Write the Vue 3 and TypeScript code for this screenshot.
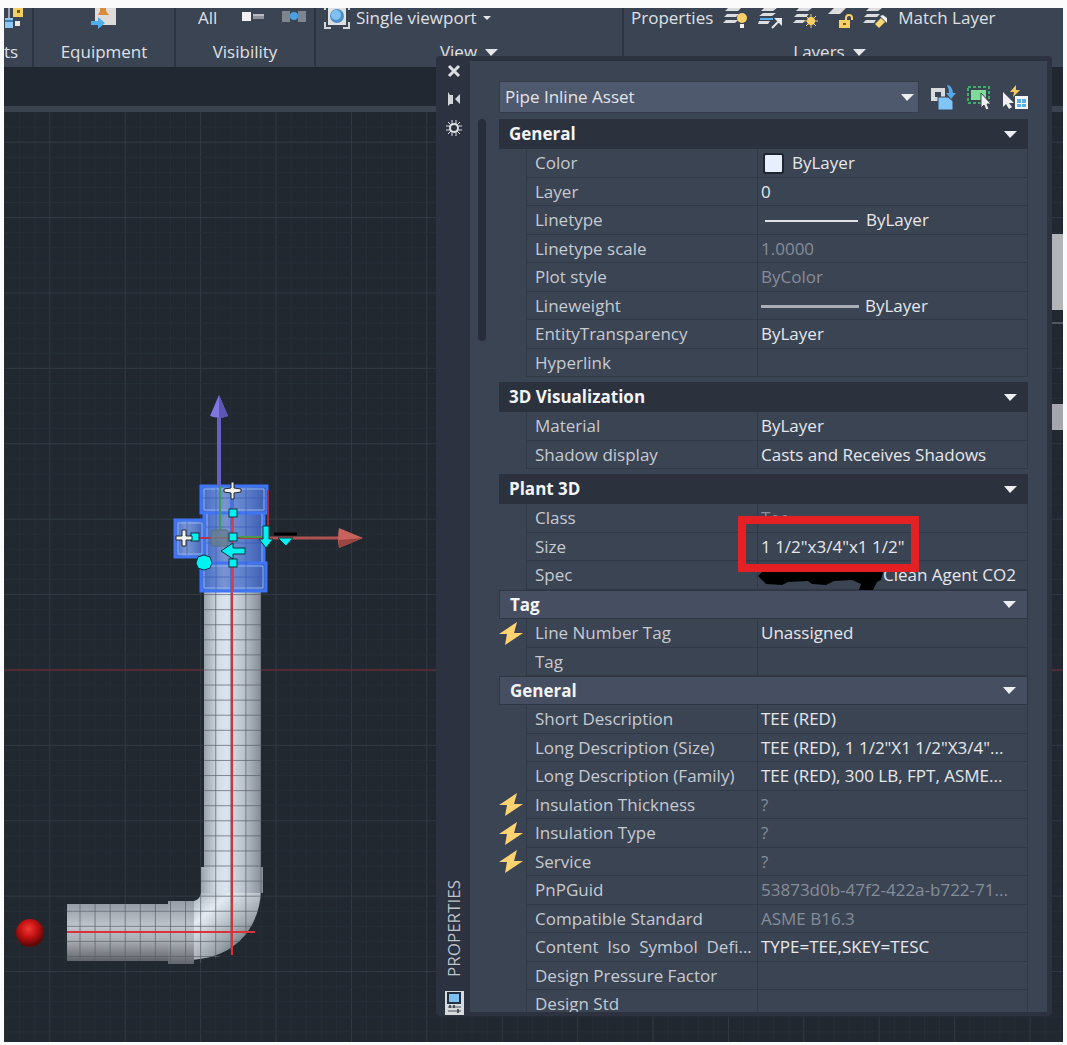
<script setup lang="ts">
import { ref } from 'vue'

interface Prop {
  label: string
  value?: string
  muted?: boolean
  bolt?: boolean
  kind?: 'swatch' | 'line' | 'weight' | 'marked' | 'redacted'
}

interface Group {
  title: string
  tone: 'dark' | 'light'
  rows: Prop[]
}

const groups: Group[] = [
  {
    title: 'General',
    tone: 'dark',
    rows: [
      { label: 'Color', value: 'ByLayer', kind: 'swatch' },
      { label: 'Layer', value: '0' },
      { label: 'Linetype', value: 'ByLayer', kind: 'line' },
      { label: 'Linetype scale', value: '1.0000', muted: true },
      { label: 'Plot style', value: 'ByColor', muted: true },
      { label: 'Lineweight', value: 'ByLayer', kind: 'weight' },
      { label: 'EntityTransparency', value: 'ByLayer' },
      { label: 'Hyperlink' },
    ],
  },
  {
    title: '3D Visualization',
    tone: 'dark',
    rows: [
      { label: 'Material', value: 'ByLayer' },
      { label: 'Shadow display', value: 'Casts and Receives Shadows' },
    ],
  },
  {
    title: 'Plant 3D',
    tone: 'dark',
    rows: [
      { label: 'Class', value: 'Tee', muted: true },
      { label: 'Size', value: '1 1/2"x3/4"x1 1/2"', kind: 'marked' },
      { label: 'Spec', value: 'Clean Agent CO2', kind: 'redacted' },
    ],
  },
  {
    title: 'Tag',
    tone: 'light',
    rows: [
      { label: 'Line Number Tag', value: 'Unassigned', bolt: true },
      { label: 'Tag' },
    ],
  },
  {
    title: 'General',
    tone: 'light',
    rows: [
      { label: 'Short Description', value: 'TEE (RED)' },
      { label: 'Long Description (Size)', value: 'TEE (RED), 1 1/2"X1 1/2"X3/4"...' },
      { label: 'Long Description (Family)', value: 'TEE (RED), 300 LB, FPT, ASME...' },
      { label: 'Insulation Thickness', value: '?', muted: true, bolt: true },
      { label: 'Insulation Type', value: '?', muted: true, bolt: true },
      { label: 'Service', value: '?', muted: true, bolt: true },
      { label: 'PnPGuid', value: '53873d0b-47f2-422a-b722-71...', muted: true },
      { label: 'Compatible Standard', value: 'ASME B16.3', muted: true },
      { label: 'Content  Iso  Symbol  Defi...', value: 'TYPE=TEE,SKEY=TESC' },
      { label: 'Design Pressure Factor' },
      { label: 'Design Std' },
    ],
  },
]

const asset = ref('Pipe Inline Asset')

// Drawing grid: one major line for every five minor ones.
const pitch = 15.08
const columns = Array.from({ length: 71 }, (_, i) => ({
  at: 4.6 + i * pitch,
  major: i % 5 === 3,
}))
const lines = Array.from({ length: 62 }, (_, i) => ({
  at: 127.1 + i * pitch,
  major: i % 5 === 1,
}))
</script>

<template>
  <div class="app">
    <header class="ribbon">
      <section class="panel p-parts">
        <div class="tools">
          <svg width="20" height="22" viewBox="0 0 20 22">
            <path d="M5 0v13" stroke="#9aa3b0" stroke-width="2" />
            <path d="M9 0h10v10H9z" fill="#f3cf63" />
            <path d="M13 3h3v3h-3z" fill="#6e5a22" />
            <path d="M1 11h8v10H1z" fill="#8cc8f2" />
            <path d="M1 14h8" stroke="#3f7fb0" stroke-width="2" />
            <path d="M11 14h5v5h-5z" fill="#e6e8ea" />
          </svg>
        </div>
        <h2>ts</h2>
      </section>
      <section class="panel p-equip">
        <div class="tools">
          <svg width="26" height="22" viewBox="0 0 26 22">
            <path d="M4 1h21v17H4z" fill="#dedcda" />
            <path d="M9 1h6v3l3 4H7l2-4z" fill="#d98a3c" />
            <path d="M0 14h7v-4l7 6-7 6v-4H0z" fill="#4faef0" />
          </svg>
        </div>
        <h2>Equipment</h2>
      </section>
      <section class="panel p-vis">
        <div class="tools">
          <span>All</span>
          <svg width="24" height="22" viewBox="0 0 24 22">
            <path d="M1 5h9v9H1z" fill="#f2f2f2" />
            <path d="M12 7h11v5H12z" fill="#8d939c" />
            <path d="M12 8h11" stroke="#b8bcc2" stroke-width="2" />
          </svg>
          <svg width="26" height="22" viewBox="0 0 26 22">
            <path d="M1 4h8v11H1zM17 4h8v11h-8z" fill="#7f858e" />
            <path d="M8 9h10" stroke="#4c90c8" stroke-width="3" />
            <circle cx="13" cy="9" r="4" fill="#4ba0e0" />
          </svg>
        </div>
        <h2>Visibility</h2>
      </section>
      <section class="panel p-view">
        <div class="tools">
          <svg width="26" height="22" viewBox="0 0 26 22">
            <path d="M4 0h18v18H4z" fill="#dfe1e3" />
            <circle cx="13" cy="9" r="7" fill="#4c8fc8" />
            <circle cx="12" cy="8" r="5" fill="#7fc1f2" />
            <path d="M1 15v6h6M25 15v6h-6M1 0v3M25 0v3" fill="none" stroke="#d4d6d9" stroke-width="2" />
          </svg>
          <span>Single viewport</span>
          <svg width="9" height="6" viewBox="0 0 9 6"><path d="M0 1h8L4 5z" fill="#e4e6e9" /></svg>
        </div>
        <h2>View <svg width="13" height="7" viewBox="0 0 13 7"><path d="M0 0h13L6 7z" fill="#e4e6e9" /></svg></h2>
      </section>
      <section class="panel p-layers">
        <div class="tools">
          <span>Properties</span>
          <svg width="25" height="22" viewBox="0 0 25 22">
            <path d="M5 1h13l-3 3H2zM4 7h12l-3 3H1zM3 13h12l-3 3H0z" fill="#dcdddf" />
            <circle cx="19" cy="11" r="5" fill="#fbd067" />
            <path d="M17 17h4v4h-4z" fill="#f1f1f1" />
          </svg>
          <svg width="25" height="22" viewBox="0 0 25 22">
            <path d="M6 1h13l-4 3H3zM5 6h13l-4 3H1z" fill="#dcdddf" />
            <path d="M2 12h13" stroke="#58aeea" stroke-width="2" />
            <path d="M1 14h11l-2 3H0z" fill="#dcdddf" />
            <path d="M14 21l7-7" stroke="#e8e9ea" stroke-width="2" />
            <path d="M16 11h8v8z" fill="#e8e9ea" />
          </svg>
          <svg width="25" height="22" viewBox="0 0 25 22">
            <path d="M6 1h13l-4 3H3zM4 7h12l-3 3H1zM3 13h9l-2 3H0z" fill="#dcdddf" />
            <circle cx="18" cy="14" r="4" fill="#fbd067" />
            <path d="M18 7v14M11 14h14M13 9l10 10M23 9L13 19" stroke="#fbd067" />
          </svg>
          <svg width="25" height="22" viewBox="0 0 25 22">
            <path d="M7 0h12l-7 7H0z" fill="#dcdddf" />
            <path d="M11 13h11v8H11z" fill="#f8cf66" />
            <path d="M18 13v-2a3 3 0 0 1 6 0v2" fill="none" stroke="#f8cf66" stroke-width="2" />
            <path d="M15 16h3v2h-3z" fill="#6b5a2c" />
          </svg>
          <svg width="25" height="22" viewBox="0 0 25 22">
            <path d="M6 1h13l-4 3H3zM4 7h13l-3 3H1zM3 13h10l-2 3H0z" fill="#dcdddf" />
            <path d="M12 17l6-6 4 4-6 6z" fill="#f8d873" />
            <path d="M17 9l7 7v-5l-4-3z" fill="#efefef" />
          </svg>
          <span>Match Layer</span>
        </div>
        <h2>Layers <svg width="13" height="7" viewBox="0 0 13 7"><path d="M0 0h13L6 7z" fill="#e4e6e9" /></svg></h2>
      </section>
    </header>
    <div class="tabs"></div>

    <main class="canvas">
      <svg class="drawing" viewBox="4 112 1059 930" preserveAspectRatio="xMinYMin slice">
        <defs>
          <linearGradient id="pipeV" x1="0" x2="1" y1="0" y2="0">
            <stop offset="0" stop-color="#9aa2ab" />
            <stop offset=".25" stop-color="#d3dbe4" />
            <stop offset=".4" stop-color="#dde4ed" />
            <stop offset=".7" stop-color="#bac2cb" />
            <stop offset="1" stop-color="#858c95" />
          </linearGradient>
          <linearGradient id="pipeH" x1="0" x2="0" y1="0" y2="1">
            <stop offset="0" stop-color="#969ca5" />
            <stop offset=".4" stop-color="#c0c6cd" />
            <stop offset=".65" stop-color="#a7abb2" />
            <stop offset="1" stop-color="#62656b" />
          </linearGradient>
          <linearGradient id="elbow" x1=".1" x2=".75" y1=".05" y2=".8">
            <stop offset="0" stop-color="#a9b2bc" />
            <stop offset=".3" stop-color="#e4ebf2" />
            <stop offset=".5" stop-color="#c6cdd5" />
            <stop offset=".8" stop-color="#9ba1a9" />
            <stop offset="1" stop-color="#70757c" />
          </linearGradient>
          <linearGradient id="tee" x1="0" x2="1" y1="0" y2="0">
            <stop offset="0" stop-color="#4268c4" />
            <stop offset=".35" stop-color="#7894d0" />
            <stop offset=".65" stop-color="#5f82cc" />
            <stop offset="1" stop-color="#3c5cb0" />
          </linearGradient>
          <radialGradient id="ball" cx=".45" cy=".35" r=".6">
            <stop offset="0" stop-color="#f03a34" />
            <stop offset=".5" stop-color="#c41212" />
            <stop offset="1" stop-color="#5e0808" />
          </radialGradient>
          <clipPath id="pipes">
            <path d="M204 592h57v275h2v26h-2C259 925 238 958 194 964h-26v-3H67v-57h101v-3h26q7-1 7-8v-26h3z" />
          </clipPath>
        </defs>

        <rect x="4" y="112" width="1059" height="930" fill="#212830" />
        <g>
          <path v-for="c in columns" :key="c.at" :d="`M${c.at} 112V1042`" :stroke="c.major ? '#323a44' : '#262e37'" />
          <path v-for="l in lines" :key="l.at" :d="`M4 ${l.at}H1063`" :stroke="l.major ? '#323a44' : '#262e37'" />
        </g>
        <path d="M4 670H1063" stroke="#7d2530" />

        <rect x="204" y="590" width="57" height="277" fill="url(#pipeV)" />
        <rect x="67" y="904" width="101" height="57" fill="url(#pipeH)" />
        <path d="M201 890h60C260 925 238 958 190 960v-58q11-2 11-9z" fill="url(#elbow)" />
        <rect x="201" y="867" width="62" height="26" fill="url(#pipeV)" />
        <rect x="168" y="901" width="26" height="63" fill="url(#pipeH)" />
        <g clip-path="url(#pipes)" stroke="#59616b" stroke-opacity=".7">
          <path v-for="c in columns" :key="c.at" :d="`M${c.at} 592V970`" />
          <path v-for="l in lines" :key="l.at" :d="`M60 ${l.at}H270`" />
        </g>
        <path d="M232 490V955" stroke="#dc3038" stroke-width="2" />
        <path d="M67 932H255" stroke="#d8323a" stroke-width="2" />
        <circle cx="30" cy="933" r="14" fill="url(#ball)" />

        <g stroke="#3f74f5" stroke-width="3" fill="url(#tee)">
          <rect x="175" y="520" width="30" height="37" />
          <rect x="204" y="511" width="60" height="54" />
          <rect x="201" y="486" width="66" height="27" />
          <rect x="201" y="563" width="65" height="28" />
        </g>
        <g stroke="#8fb4fa" fill="none">
          <path d="M178 523h24v31h-24zM207 514v48M262 514v48M204 489h60v21h-60zM204 566h59v22h-59z" />
          <path d="M187 522v33M216 488v102M246 488v102M203 498h62M206 527h56M206 543h56M203 577h60" stroke="#3559b4" stroke-opacity=".6" />
        </g>
        <path d="M232 490V592" stroke="#4b70dc" stroke-width="4" />
        <path d="M232 510V592" stroke="#dc3a4a" stroke-width="2" />
        <path d="M268 490V530" stroke="#a32c3e" stroke-width="2" />
        <path d="M220 486V530" stroke="#3f9a58" stroke-width="2" />
        <path d="M190 538H265" stroke="#b3344c" stroke-width="2" />
        <path d="M240 537H262" stroke="#4a9a4a" stroke-width="2" />
        <rect x="211" y="530" width="17" height="16" rx="2" fill="#66808c" stroke="#55707c" fill-opacity=".8" />

        <path d="M219 414V486" stroke="#6a60c4" stroke-width="4" />
        <path d="M219 395l9 21q-9 3-18 0z" fill="#8078e0" />
        <path d="M219 395l9 21q-4 2-9 2z" fill="#5e56b4" />
        <path d="M268 538H342" stroke="#b0524f" stroke-width="3" />
        <path d="M339 528l24 10-24 10q-2-10 0-20z" fill="#c8625c" />
        <path d="M339 540l24-2-24 10z" fill="#9a4542" />

        <g fill="#00f2f2" stroke="#10343c">
          <rect x="229" y="509" width="8" height="8" />
          <rect x="229" y="533" width="8" height="8" />
          <rect x="229" y="559" width="8" height="8" />
          <rect x="191" y="533" width="8" height="8" />
          <path d="M204 555l6 2 2 6-2 5-6 2-6-2-2-5 2-6z" />
          <path d="M221 551l12-8v5h12v6h-12v5z" />
          <path d="M266 548l-7-9h4v-13h6v13h4z" />
          <path d="M278 538h15l-7 8z" />
        </g>
        <path d="M274 534H297" stroke="#000" stroke-width="3" />
        <g fill="#f2f2ee" stroke="#20262e">
          <path d="M231 482h3v6l7 1v3l-7 1v6h-3v-6l-7-1v-3l7-1z" />
          <path d="M182 530h4v6h6v4h-6v6h-4v-6h-6v-4h6z" />
        </g>

        <rect x="1052" y="234" width="11" height="76" fill="#b2b4b7" />
        <path d="M1052 323H1063" stroke="#505863" stroke-width="2" />
        <rect x="1052" y="404" width="11" height="26" fill="#a6a7ae" />
      </svg>
    </main>

    <aside class="palette">
      <div class="rail">
        <button type="button" aria-label="Close">
          <svg width="14" height="14" viewBox="0 0 14 14"><path d="M2 2l10 10M12 2L2 12" stroke="#dcdee2" stroke-width="3" /></svg>
        </button>
        <button type="button" aria-label="Auto-hide">
          <svg width="14" height="14" viewBox="0 0 14 14"><path d="M1 0v14l2-2h3V3H3zM13 2v10L8 7z" fill="#d2d5da" /></svg>
        </button>
        <button type="button" aria-label="Options">
          <svg width="16" height="16" viewBox="0 0 16 16">
            <circle cx="8" cy="8" r="4" fill="none" stroke="#dcdee2" stroke-width="2" />
            <path d="M6 0v5M10 0v5M6 11v5M10 11v5M0 6h5M0 10h5M11 6h5M11 10h5M2 2l3 3M11 11l3 3M14 2l-3 3M5 11l-3 3" stroke="#dcdee2" />
          </svg>
        </button>
        <span class="name">PROPERTIES</span>
        <svg width="19" height="24" viewBox="0 0 19 24">
          <path d="M0 0h19v24H0z" fill="#d8dadd" />
          <path d="M3 2h12v10H3z" fill="#7cc0f2" stroke="#22303f" stroke-width="2" />
          <path d="M3 16h13M3 20h13" stroke="#4b515a" />
          <path d="M9 14v3M13 18v4M5 14v3" stroke="#4b515a" stroke-width="2" />
        </svg>
      </div>

      <div class="body">
        <div class="picker">
          <label class="combo">
            <select v-model="asset" aria-label="Selected object type">
              <option>Pipe Inline Asset</option>
            </select>
            <svg width="13" height="7" viewBox="0 0 13 7"><path d="M0 0h13L6 7z" fill="#eceef0" /></svg>
          </label>
          <div class="actions">
            <button type="button" aria-label="Toggle PICKADD">
              <svg width="25" height="25" viewBox="0 0 25 25">
                <path d="M0 3h14v13H0z" fill="#d9dadb" />
                <path d="M4 7h6v5H4z" fill="#3b4453" />
                <path d="M7 12h10l5 4v9H7z" fill="#7fc4fb" stroke="#3b4453" />
                <path d="M16 0q5 0 6 8h3l-5 6-5-6h3q0-4-2-8z" fill="#56a9e6" />
              </svg>
            </button>
            <button type="button" aria-label="Select Objects">
              <svg width="25" height="25" viewBox="0 0 25 25">
                <path d="M1 2h21v16H1z" fill="none" stroke="#3fae68" stroke-width="2" stroke-dasharray="3 2" />
                <path d="M4 5h15v10H4z" fill="#7fdb98" />
                <path d="M14 8v15l3-3 2 5 3-1-2-5h4z" fill="#f0f0f0" stroke="#3b4453" />
              </svg>
            </button>
            <button type="button" aria-label="Quick Select">
              <svg width="25" height="25" viewBox="0 0 25 25">
                <path d="M0 7v15l3-3 3 5 3-2-3-4h5z" fill="#f0f0f0" />
                <path d="M13 0l-6 7h4l-1 5 7-7h-4z" fill="#f5c75c" />
                <path d="M12 11h13v13H12z" fill="#f4f6f8" />
                <path d="M14 14h4v4h-4zM19 14h4v4h-4zM14 19h4v3h-4zM19 19h4v3h-4z" fill="#5aaeea" />
              </svg>
            </button>
          </div>
        </div>

        <div class="content">
          <div class="scroll"></div>
          <div class="groups">
            <section v-for="(g, i) in groups" :key="i" class="group" :class="g.tone">
              <button type="button" class="heading">
                {{ g.title }}
                <svg width="13" height="7" viewBox="0 0 13 7"><path d="M0 0h13L6 7z" fill="#eceef0" /></svg>
              </button>
              <table>
                <tbody>
                  <tr v-for="r in g.rows" :key="r.label">
                    <td class="gutter">
                      <svg v-if="r.bolt" width="25" height="24" viewBox="0 0 25 24">
                        <path d="M18 0L0 12h8L6 23 24 11h-9z" fill="#ffd470" />
                      </svg>
                    </td>
                    <th scope="row">{{ r.label }}</th>
                    <td class="value" :class="[r.kind, { muted: r.muted }]">
                      <i v-if="r.kind === 'swatch' || r.kind === 'line' || r.kind === 'weight'"></i>
                      <svg v-if="r.kind === 'redacted'" class="scribble" width="126" height="26" viewBox="0 0 126 26">
                        <path d="M0 12l8-8h112l5 4-2 8-4 2-4 8h-14l2-6-9-4-18 1-8 4-14-1-4-3-20 1-6 3-16-1-5-5z" fill="#000" />
                      </svg>
                      <span v-if="r.value">{{ r.value }}</span>
                      <b v-if="r.kind === 'marked'" class="mark"></b>
                    </td>
                  </tr>
                </tbody>
              </table>
            </section>
          </div>
        </div>
      </div>
    </aside>
  </div>
</template>

<style>
body {
  margin: 0;
  background: #fbfbfc;
}
</style>

<style scoped>
.app {
  position: relative;
  box-sizing: border-box;
  height: 100vh;
  padding: 8px 4px 3px;
  display: flex;
  flex-direction: column;
  overflow: hidden;
  font-family: "Open Sans", "Noto Sans", sans-serif;
  font-size: 17px;
  line-height: 22px;
  color: #dfe1e5;
}
svg {
  display: block;
  flex: none;
}
button {
  padding: 0;
  border: 0;
  background: none;
  font: inherit;
  color: inherit;
}

.ribbon {
  flex: none;
  display: flex;
  height: 59px;
  background: #3b4453;
  overflow: hidden;
  white-space: nowrap;
}
.panel {
  box-sizing: border-box;
  flex: none;
  display: flex;
  flex-direction: column;
  gap: 13px;
  border-right: 2px solid #2d3442;
}
.panel h2 {
  display: flex;
  justify-content: center;
  align-items: center;
  gap: 8px;
  margin: 0;
  font-size: 17px;
  font-weight: 400;
}
.tools {
  display: flex;
  align-items: center;
  height: 20px;
}
.p-parts { width: 30px; }
.p-parts h2 { justify-content: flex-start; }
.p-equip { width: 142px; }
.p-equip .tools { justify-content: center; }
.p-vis { width: 140px; }
.p-vis .tools { gap: 16px; padding-left: 22px; }
.p-vis .tools span { margin-right: 8px; }
.p-view { width: 308px; }
.p-view .tools { gap: 6px; padding-left: 8px; }
.p-layers { flex: 1; border: 0; }
.p-layers .tools { gap: 10px; padding-left: 7px; }
.p-layers h2 { padding-right: 28px; }

.tabs {
  flex: none;
  height: 39px;
  background: #212831;
  border-bottom: 6px solid #3b4351;
}
.canvas {
  flex: 1;
  min-height: 0;
  background: #212830;
}
.drawing {
  width: 100%;
  height: 100%;
}

.palette {
  position: absolute;
  top: 56px;
  left: 436px;
  right: 15px;
  bottom: 29px;
  box-sizing: border-box;
  display: flex;
  padding: 5px 5px 4px 2px;
  border-radius: 4px;
  background: #2c323f;
}
.rail {
  flex: none;
  width: 32px;
  display: flex;
  flex-direction: column;
  align-items: center;
  gap: 14px;
  padding-top: 3px;
  margin-bottom: -3px;
}
.rail button {
  height: 14px;
}
.rail .name {
  margin-top: auto;
  writing-mode: vertical-rl;
  transform: rotate(180deg);
  font-size: 17px;
  color: #bfc3ca;
}
.body {
  flex: 1;
  min-width: 0;
  display: flex;
  flex-direction: column;
  gap: 6px;
  padding: 20px 19px 0 8px;
  background: #3b4453;
}
.picker {
  flex: none;
  display: flex;
  align-items: center;
  justify-content: space-between;
  gap: 12px;
  padding-left: 21px;
}
.combo {
  flex: 1;
  display: flex;
  align-items: center;
  box-sizing: border-box;
  height: 32px;
  padding-right: 4px;
  border: 1px solid #343c4b;
  background: #4e596e;
}
.combo select {
  flex: 1;
  appearance: none;
  padding: 0 5px;
  border: 0;
  background: none;
  font: inherit;
  color: #e2e4e8;
}
.actions {
  display: flex;
  gap: 11px;
}
.content {
  flex: 1;
  min-height: 0;
  display: flex;
  gap: 13px;
  overflow: hidden;
}
.scroll {
  flex: none;
  width: 8px;
  height: 222px;
  border-radius: 4px;
  background: #272d3a;
}
.groups {
  flex: 1;
  min-width: 0;
}
.group.dark + .dark {
  margin-top: 5px;
}
.heading {
  box-sizing: border-box;
  display: flex;
  align-items: center;
  justify-content: space-between;
  width: 100%;
  height: 30px;
  padding: 0 11px 0 10px;
  background: #2c313e;
  font-weight: 700;
  color: #f3f4f6;
}
.light .heading {
  height: 29px;
  background: #464f62;
  border: 1px solid #2f3543;
}
table {
  width: 100%;
  table-layout: fixed;
  border-collapse: separate;
  border-spacing: 0;
}
tr { height: 29px; }
tr:nth-child(even) { height: 28px; }
td,
th {
  box-sizing: border-box;
  padding: 0;
  font-weight: 400;
  text-align: left;
  white-space: pre;
}
.gutter { width: 27px; }
th {
  width: 231px;
  padding-left: 8px;
  border-left: 1px solid #313847;
  border-bottom: 1px solid #313847;
  color: #c6cad1;
}
.value {
  position: relative;
  padding-left: 3px;
  border: solid #313847;
  border-width: 0 1px 1px;
  color: #e6e8eb;
}
.value.muted { color: #868d99; }
.value i {
  display: inline-block;
  vertical-align: middle;
}
.swatch i {
  width: 17px;
  height: 17px;
  margin: 0 8px 0 2px;
  border: 2px solid #1f252f;
  border-radius: 3px;
  background: #e8effc;
}
.line i {
  width: 93px;
  height: 2px;
  margin: 0 8px 0 4px;
  background: #dfe1e4;
}
.weight i {
  width: 98px;
  height: 3px;
  margin-right: 6px;
  background: #a9adb6;
}
.redacted span {
  margin-left: 122px;
}
.scribble {
  position: absolute;
  left: 0;
  top: 3px;
}
.mark {
  position: absolute;
  z-index: 1;
  top: -17px;
  left: -20px;
  box-sizing: border-box;
  width: 181px;
  height: 56px;
  border: 8px solid #e52024;
}
</style>
